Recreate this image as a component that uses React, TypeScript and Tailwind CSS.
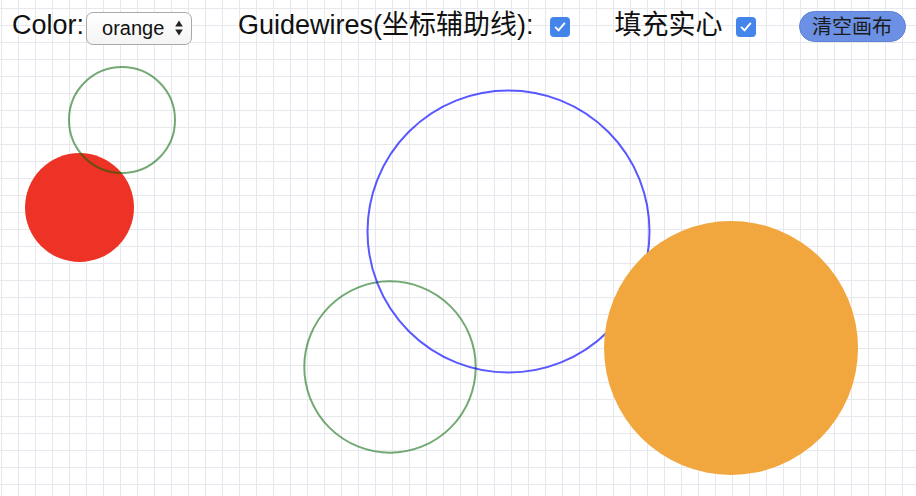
import { useState } from "react";

const font = { fontFamily: '"Liberation Sans", "Noto Sans CJK SC", sans-serif' };

// 复选框（自绘，和截图里的蓝色方块一致）
const Check = ({ checked, onChange }: { checked: boolean; onChange: () => void }) => (
    <button
        onClick={onChange}
        className={`w-5 h-5 rounded-[4px] flex items-center justify-center shrink-0 ${
            checked ? "bg-[#4485ec]" : "bg-white border border-[#9a9a9a]"
        }`}
    >
        {checked && (
            <svg viewBox="0 0 20 20" className="w-[16px] h-[16px]" fill="none" stroke="white" strokeWidth="2.4" strokeLinecap="round" strokeLinejoin="round">
                <path d="M4.5 10.5l3.6 3.8L15.5 5.5" />
            </svg>
        )}
    </button>
);

const circles = [
    { cx: 79.5, cy: 207.5, r: 54.5, fill: "#ed3325" },
    { cx: 122, cy: 120, r: 53, stroke: "#006400", opacity: 0.55 },
    { cx: 390, cy: 367, r: 85.7, stroke: "#006400", opacity: 0.55 },
    { cx: 508.5, cy: 231.5, r: 141, stroke: "#0000ff", opacity: 0.65 },
    { cx: 731, cy: 348, r: 127, fill: "#f2a73e" },
];

const App = () => {
    const [color, setColor] = useState("orange");
    const [guides, setGuides] = useState(true);
    const [filled, setFilled] = useState(true);

    return (
        <div
            className="w-[916px] h-[496px] overflow-hidden bg-white bg-[linear-gradient(to_right,#e7e7ee_1px,transparent_1px),linear-gradient(to_bottom,#e7e7ee_1px,transparent_1px)] bg-size-[17px_17px] bg-position-[1px_8px] text-[#111]"
            style={font}
        >
            {/* 工具栏 */}
            <div className="h-[54px] flex items-center pl-3">
                <span className="text-[27px] leading-none mb-[3px]">Color:</span>
                <div className="relative ml-[2px] mt-[2px]">
                    <select
                        value={color}
                        onChange={(e) => setColor(e.target.value)}
                        className="appearance-none w-[106px] h-[33px] pl-[15px] rounded-[7px] border border-[#a9a9a9] bg-[linear-gradient(to_bottom,#ffffff,#f4f4f4)] text-[20px] text-[#111] outline-none"
                        style={font}
                    >
                        <option>red</option>
                        <option>orange</option>
                        <option>green</option>
                        <option>blue</option>
                    </select>
                    <svg viewBox="0 0 8 16" className="absolute right-[9px] top-[8px] w-[8px] h-[16px] pointer-events-none" fill="#222">
                        <path d="M4 0.5L7.8 6.5H0.2z" />
                        <path d="M4 15.5L7.8 9.5H0.2z" />
                    </svg>
                </div>

                <span className="text-[27px] leading-none ml-[46px] mb-[3px]">Guidewires(坐标辅助线):</span>
                <div className="ml-[16px]">
                    <Check checked={guides} onChange={() => setGuides(!guides)} />
                </div>

                <span className="text-[27px] leading-none ml-[45px] mb-[3px]">填充实心</span>
                <div className="ml-[13px]">
                    <Check checked={filled} onChange={() => setFilled(!filled)} />
                </div>

                <button className="ml-[43px] mb-[2px] w-[107px] h-[31px] rounded-full bg-[#6b90e4] border border-[#5d82d6] text-[20px] text-[#1c1c1c]">
                    清空画布
                </button>
            </div>

            {/* 画布 */}
            <svg viewBox="0 54 916 442" className="w-[916px] h-[442px] block">
                {circles.map((c, i) => (
                    <circle
                        key={i}
                        cx={c.cx}
                        cy={c.cy}
                        r={c.r}
                        fill={c.fill ?? "none"}
                        stroke={c.stroke ?? "none"}
                        strokeWidth={2}
                        strokeOpacity={c.opacity ?? 1}
                    />
                ))}
            </svg>
        </div>
    );
};

export default App;
